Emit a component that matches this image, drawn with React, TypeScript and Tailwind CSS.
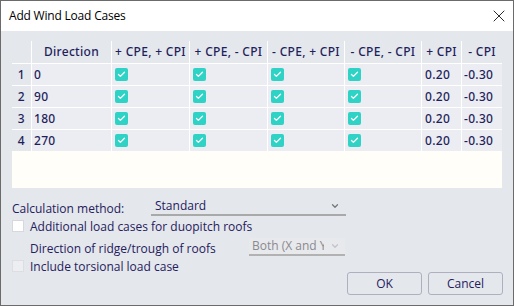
import { Check, ChevronDown, X } from 'lucide-react'

const cols = ['Direction', '+ CPE, + CPI', '+ CPE, - CPI', '- CPE, + CPI', '- CPE, - CPI', '+ CPI', '- CPI']
const rows = [
  { id: 1, dir: '0' },
  { id: 2, dir: '90' },
  { id: 3, dir: '180' },
  { id: 4, dir: '270' },
]

export default function App() {
  return (
    <div className="w-[514px] h-[306px] border border-[#6b6b6b] bg-[#e4e7eb] flex flex-col font-['Open_Sans',sans-serif] text-[#24205e] overflow-hidden">
      <div className="h-[30px] bg-white flex items-center justify-between pl-[8px] pr-[4px] shrink-0">
        <span className="text-[12px] text-black tracking-[-0.2px]">Add Wind Load Cases</span>
        <X className="size-[20px] text-black" strokeWidth={1} />
      </div>

      <div className="flex-1 flex flex-col px-[11px] pt-[10px]">
        <WindTable />

        <div className="flex items-end h-[18px] mt-[10px]">
          <span className="w-[139px] text-[12px] leading-[14px] mb-[0px]">Calculation method:</span>
          <div className="w-[195px] h-[18px] border-b-2 border-[#a9a9a9] flex items-center justify-between pl-[4px] pr-[6px]">
            <span className="text-[12px] leading-[14px]">Standard</span>
            <ChevronDown className="size-[10px] text-[#777]" strokeWidth={3} />
          </div>
        </div>

        <div className="flex items-center gap-[6px] mt-[3px] h-[14px]">
          <span className="size-[12px] bg-white border border-[#d6d8dc]" />
          <span className="text-[12px] leading-[14px] mt-[2px]">Additional load cases for duopitch roofs</span>
        </div>

        <div className="flex items-center mt-[5px] h-[18px] pl-[18px]">
          <span className="w-[219px] text-[12px] leading-[14px] mt-[3px]">Direction of ridge/trough of roofs</span>
          <div className="w-[96px] h-[18px] bg-[#e8e9ec] border-b-2 border-[#b2b2b2] flex items-center justify-between pl-[3px] pr-[5px] overflow-hidden">
            <span className="text-[12px] leading-[14px] text-[#8a8a90] whitespace-nowrap overflow-hidden w-[72px]">Both (X and Y)</span>
            <ChevronDown className="size-[10px] text-[#c4c4c8] shrink-0" strokeWidth={3} />
          </div>
        </div>

        <div className="flex justify-between mt-[4px]">
          <div className="flex items-center gap-[6px] h-[12px] self-start">
            <span className="size-[12px] bg-[#eceef1] border border-[#dcdee2]" />
            <span className="text-[12px] leading-[14px] mt-[2px]">Include torsional load case</span>
          </div>
          <div className="flex gap-[6px] mt-[12px] mr-[-1px]">
            <button className="w-[75px] h-[23px] rounded-[3px] border border-[#aeb0c0] text-[12px] text-[#24205e]">OK</button>
            <button className="w-[75px] h-[23px] rounded-[3px] border border-[#aeb0c0] text-[12px] text-[#24205e]">Cancel</button>
          </div>
        </div>
      </div>
    </div>
  )
}

function WindTable() {
  return (
    <div className="w-[490px] bg-[#fffef8] font-['Noto_Sans',sans-serif] text-[12px] font-medium tracking-[0.3px] text-[#1f1f5c]">
      <div className="grid grid-cols-[19px_79px_77px_77px_76px_76px_39px_40px] gap-px bg-white">
        <div className="h-[22px] bg-[#e4e7ec]" />
        {cols.map((c) => (
          <div key={c} className="h-[22px] bg-[#e4e7ec] flex items-center justify-center whitespace-nowrap">
            {c}
          </div>
        ))}
        {rows.map((r) => (
          <Row key={r.id} id={r.id} dir={r.dir} />
        ))}
      </div>
      <div className="h-[37px]" />
    </div>
  )
}

function Row({ id, dir }: { id: number; dir: string }) {
  return (
    <>
      <div className="h-[21px] bg-[#e4e7ec] flex items-center justify-end pr-[6px]">{id}</div>
      <div className="h-[21px] bg-[#ecedf2] flex items-center pl-[2px]">{dir}</div>
      {[0, 1, 2, 3].map((i) => (
        <div key={i} className="h-[21px] bg-[#ecedf2] flex items-center pl-[3px]">
          <span className="size-[13px] rounded-[2px] bg-[#2ed3c6] flex items-center justify-center">
            <Check className="size-[9px] text-white" strokeWidth={3.5} />
          </span>
        </div>
      ))}
      <div className="h-[21px] bg-[#ecedf2] flex items-center pl-[3px]">0.20</div>
      <div className="h-[21px] bg-[#ecedf2] flex items-center pl-[2px]">-0.30</div>
    </>
  )
}
